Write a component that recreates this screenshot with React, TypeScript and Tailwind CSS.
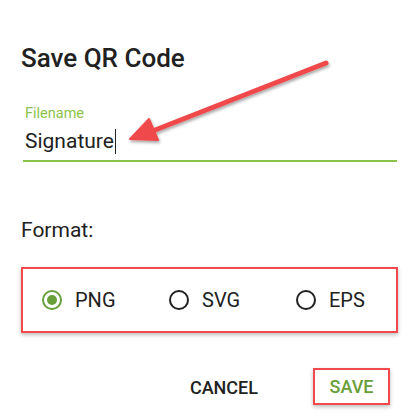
export default function App() {
  const formats = [
    { label: 'PNG', checked: true },
    { label: 'SVG', checked: false },
    { label: 'EPS', checked: false },
  ];

  return (
    <div className="relative w-[420px] h-[420px] bg-white font-['Roboto',sans-serif] overflow-hidden">
      <div className="pt-[43px] pl-[21px] pr-[22px]">
        {/* Title */}
        <h1 className="text-[26px] leading-[30px] font-medium text-[#212121]">Save QR Code</h1>

        {/* Filename field */}
        <div className="mt-[32px] pl-[2px] pr-[1px]">
          <div className="text-[14.5px] leading-[18px] text-[#8bc34a] pl-[2px]">Filename</div>
          <div className="mt-[5px] flex items-center text-[21px] leading-[26px] text-[#212121] pl-[2px]">
            Signature<span className="ml-[1px] w-px h-[25px] bg-[#212121]" />
          </div>
          <div className="mt-[6px] h-[2px] bg-[#8bc34a]" />
        </div>

        {/* Format */}
        <div className="mt-[56px] text-[21px] leading-[25px] text-[#212121]">Format:</div>

        <div className="mt-[24px] h-[66px] border-2 border-[#f04a4c] shadow-[0_2px_4px_rgba(0,0,0,0.25)] flex items-center pl-[19px]">
          {formats.map((f) => (
            <div key={f.label} className="flex items-center w-[127px] shrink-0">
              <span
                className={`w-[20px] h-[20px] rounded-full border-[2.5px] flex items-center justify-center ${
                  f.checked ? 'border-[#689f38]' : 'border-[#212121]'
                }`}
              >
                {f.checked && <span className="w-[10px] h-[10px] rounded-full bg-[#689f38]" />}
              </span>
              <span className="ml-[13px] text-[20px] leading-[24px] text-[#212121]">{f.label}</span>
            </div>
          ))}
        </div>

        {/* Actions */}
        <div className="mt-[35px] flex justify-end items-center pr-[8px]">
          <button className="text-[18px] leading-[22px] font-medium text-[#212121] mr-[55px] mt-[3px]">CANCEL</button>
          <div className="w-[77px] h-[37px] border-2 border-[#f04a4c] shadow-[0_2px_4px_rgba(0,0,0,0.25)] flex items-center justify-center">
            <button className="text-[18px] leading-[22px] font-medium text-[#689f38]">SAVE</button>
          </div>
        </div>
      </div>

      {/* Annotation arrow */}
      <svg className="absolute left-0 top-0 pointer-events-none" width="420" height="420">
        <defs>
          <filter id="sh" x="-20%" y="-20%" width="140%" height="140%">
            <feDropShadow dx="1" dy="2" stdDeviation="1.5" floodColor="#000" floodOpacity="0.35" />
          </filter>
        </defs>
        <g filter="url(#sh)">
          <line x1="326" y1="63" x2="150" y2="132" stroke="#f04a4c" strokeWidth="5" strokeLinecap="round" />
          <path d="M130 139 L149 119 L158 140 Z" fill="#f04a4c" stroke="#f04a4c" strokeWidth="2" strokeLinejoin="round" />
        </g>
      </svg>
    </div>
  );
}
